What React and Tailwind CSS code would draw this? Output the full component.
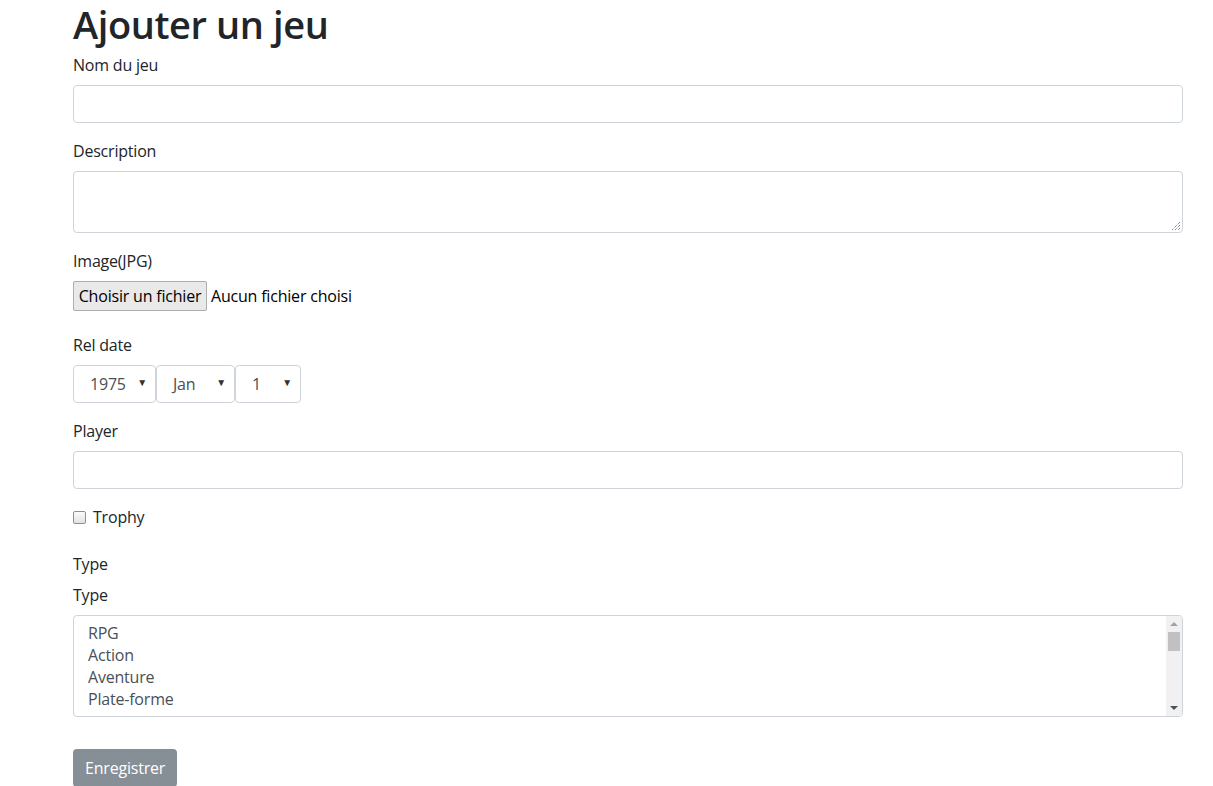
const font = { fontFamily: '"Open Sans", "Noto Sans", sans-serif' };

const Label = ({ children, className = "" }) => (
  <div className={`text-[16px] leading-6 text-[#212529] ${className}`}>{children}</div>
);

const TextField = ({ className = "h-[38px]" }) => (
  <div className={`w-full rounded border border-[#ced4da] bg-white ${className}`} />
);

const SelectBox = ({ value, width }) => (
  <div
    className={`relative flex h-[38px] items-center rounded border border-[#ced4da] bg-white pl-4 text-[16px] text-[#495057] ${width}`}
  >
    {value}
    <span className="absolute right-[8px] top-[11px] text-[10px] leading-none text-[#333]">▼</span>
  </div>
);

const App = () => {
  const types = ["RPG", "Action", "Aventure", "Plate-forme"];

  return (
    <div className="min-h-[786px] bg-white tracking-[-0.2px] text-[#212529]" style={font}>
      <div className="w-[1183px] pl-[73px]">
        <h1 className="mb-[5px] text-[38px] font-semibold leading-[48px] tracking-[-0.4px] text-[#212529]">
          Ajouter un jeu
        </h1>

        <Label className="mb-2">Nom du jeu</Label>
        <TextField />

        <Label className="mb-2 mt-4">Description</Label>
        <div className="relative h-[62px] w-full rounded border border-[#ced4da] bg-white">
          <svg className="absolute bottom-[1px] right-[1px]" width="10" height="10" viewBox="0 0 10 10">
            <path d="M9 1 L1 9 M9 4 L4 9 M9 7 L7 9" stroke="#555" strokeWidth="1" strokeDasharray="1 1" fill="none" />
          </svg>
        </div>

        <Label className="mb-2 mt-4">Image(JPG)</Label>
        <div className="flex h-[30px] items-center">
          <div className="flex h-[30px] w-[134px] items-center justify-center rounded-[2px] border border-[#adadad] bg-[#e9e9e9] text-[16px] text-black">
            Choisir un fichier
          </div>
          <span className="ml-1 text-[16px] text-black">Aucun fichier choisi</span>
        </div>

        <Label className="mb-2 mt-[22px]">Rel date</Label>
        <div className="flex">
          <SelectBox value="1975" width="w-[83px]" />
          <SelectBox value="Jan" width="w-[79px]" />
          <SelectBox value="1" width="w-[66px]" />
        </div>

        <Label className="mb-2 mt-4">Player</Label>
        <TextField />

        <div className="mt-4 flex h-6 items-center">
          <div className="h-[13px] w-[13px] rounded-[2px] border border-[#8f8f8f] bg-gradient-to-b from-[#fbfbfb] to-[#e2e2e2]" />
          <span className="ml-[7px] text-[16px] leading-6">Trophy</span>
        </div>

        <Label className="mt-[23px] mb-[7px]">Type</Label>
        <Label className="mb-2">Type</Label>
        <div className="flex h-[102px] w-full overflow-hidden rounded border border-[#ced4da] bg-white">
          <div className="flex-1 pl-[14px] pt-[6px]">
            {types.map((t) => (
              <div key={t} className="text-[16px] leading-[22px] text-[#495057]">
                {t}
              </div>
            ))}
          </div>
          <div className="flex w-[16px] flex-col items-center bg-[#f1f1f1]">
            <svg width="16" height="16" viewBox="0 0 16 16">
              <path d="M4 10 L8 6 L12 10 Z" fill="#a3a3a3" />
            </svg>
            <div className="h-[19px] w-[12px] bg-[#c1c1c1]" />
            <div className="flex-1" />
            <svg width="16" height="16" viewBox="0 0 16 16">
              <path d="M4 6 L8 10 L12 6 Z" fill="#505050" />
            </svg>
          </div>
        </div>

        <button className="mt-[32px] h-[38px] rounded bg-[#868e96] px-3 text-[16px] text-white">Enregistrer</button>
      </div>
    </div>
  );
};

export default App;
